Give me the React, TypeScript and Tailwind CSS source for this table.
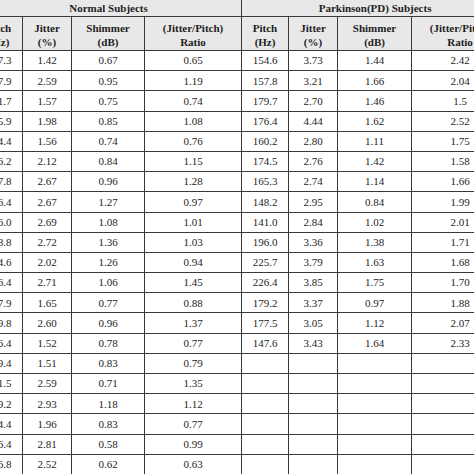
import React from "react";

const normal: string[][] = [
  ["157.3", "1.42", "0.67", "0.65"],
  ["157.9", "2.59", "0.95", "1.19"],
  ["161.7", "1.57", "0.75", "0.74"],
  ["165.9", "1.98", "0.85", "1.08"],
  ["164.4", "1.56", "0.74", "0.76"],
  ["166.2", "2.12", "0.84", "1.15"],
  ["127.8", "2.67", "0.96", "1.28"],
  ["156.4", "2.67", "1.27", "0.97"],
  ["166.0", "2.69", "1.08", "1.01"],
  ["168.8", "2.72", "1.36", "1.03"],
  ["164.6", "2.02", "1.26", "0.94"],
  ["156.4", "2.71", "1.06", "1.45"],
  ["127.9", "1.65", "0.77", "0.88"],
  ["129.8", "2.60", "0.96", "1.37"],
  ["166.4", "1.52", "0.78", "0.77"],
  ["169.4", "1.51", "0.83", "0.79"],
  ["181.5", "2.59", "0.71", "1.35"],
  ["169.2", "2.93", "1.18", "1.12"],
  ["164.4", "1.96", "0.83", "0.77"],
  ["166.4", "2.81", "0.58", "0.99"],
  ["166.8", "2.52", "0.62", "0.63"],
];

const pd: string[][] = [
  ["154.6", "3.73", "1.44", "2.42"],
  ["157.8", "3.21", "1.66", "2.04"],
  ["179.7", "2.70", "1.46", "1.5"],
  ["176.4", "4.44", "1.62", "2.52"],
  ["160.2", "2.80", "1.11", "1.75"],
  ["174.5", "2.76", "1.42", "1.58"],
  ["165.3", "2.74", "1.14", "1.66"],
  ["148.2", "2.95", "0.84", "1.99"],
  ["141.0", "2.84", "1.02", "2.01"],
  ["196.0", "3.36", "1.38", "1.71"],
  ["225.7", "3.79", "1.63", "1.68"],
  ["226.4", "3.85", "1.75", "1.70"],
  ["179.2", "3.37", "0.97", "1.88"],
  ["177.5", "3.05", "1.12", "2.07"],
  ["147.6", "3.43", "1.64", "2.33"],
];

const cell = "border border-[#383838] text-center align-middle p-0";

export default function App() {
  return (
    <div className="w-[474px] h-[474px] overflow-hidden bg-white">
      <table
        className="table-fixed border-collapse ml-[-25px] mt-[-1px] text-[11px] text-[#1e1e1e]"
        style={{ fontFamily: '"Liberation Serif", "Times New Roman", serif', width: 533 }}
      >
        <colgroup>
          <col className="w-[47px]" />
          <col className="w-[49px]" />
          <col className="w-[73px]" />
          <col className="w-[97px]" />
          <col className="w-[47px]" />
          <col className="w-[49px]" />
          <col className="w-[74px]" />
          <col className="w-[97px]" />
        </colgroup>
        <thead>
          <tr className="bg-[#e8e8e8] font-bold">
            <th colSpan={4} className={`${cell} h-[17px] leading-[14px]`}>
              Normal Subjects
            </th>
            <th colSpan={4} className={`${cell} h-[17px] leading-[14px]`}>
              Parkinson(PD) Subjects
            </th>
          </tr>
          <tr className="bg-[#e8e8e8] font-bold">
            {[0, 1].map((g) => (
              <React.Fragment key={g}>
                <th className={`${cell} h-[34px] leading-[14px] pt-[3px]`}>
                  Pitch
                  <br />
                  (Hz)
                </th>
                <th className={`${cell} h-[34px] leading-[14px] pt-[3px]`}>
                  Jitter
                  <br />
                  (%)
                </th>
                <th className={`${cell} h-[34px] leading-[14px] pt-[3px]`}>
                  Shimmer
                  <br />
                  (dB)
                </th>
                <th className={`${cell} h-[34px] leading-[14px] pt-[3px] whitespace-nowrap`}>
                  (Jitter/Pitch)
                  <br />
                  Ratio
                </th>
              </React.Fragment>
            ))}
          </tr>
        </thead>
        <tbody>
          {normal.map((row, i) => (
            <tr key={i}>
              {row.map((v, j) => (
                <td key={j} className={`${cell} h-[20.2px]`}>
                  {v}
                </td>
              ))}
              {(pd[i] ?? ["", "", "", ""]).map((v, j) => (
                <td key={`p${j}`} className={`${cell} h-[20.2px]`}>
                  {v}
                </td>
              ))}
            </tr>
          ))}
        </tbody>
      </table>
    </div>
  );
}
